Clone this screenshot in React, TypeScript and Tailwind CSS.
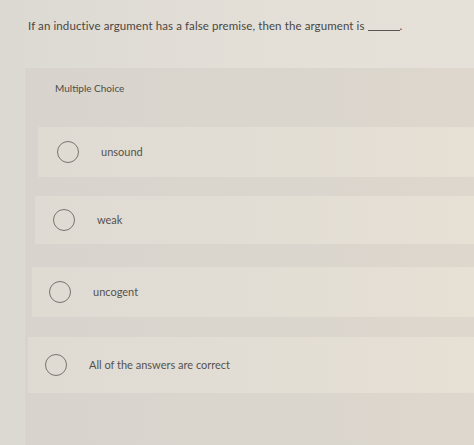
import React from "react";

const options = [
  { label: "unsound", ml: "ml-[38px]", h: "h-[50px]", pl: "pl-[19px]", gap: "gap-[22px]", mt: "mt-[32px]" },
  { label: "weak", ml: "ml-[35px]", h: "h-[48px]", pl: "pl-[18px]", gap: "gap-[22px]", mt: "mt-[19px]" },
  { label: "uncogent", ml: "ml-[32px]", h: "h-[50px]", pl: "pl-[17px]", gap: "gap-[22px]", mt: "mt-[23px]" },
  { label: "All of the answers are correct", ml: "ml-[28px]", h: "h-[56px]", pl: "pl-[17px]", gap: "gap-[22px]", mt: "mt-[20px]" },
];

export default function App() {
  return (
    <div
      className="w-[474px] h-[445px] overflow-hidden bg-gradient-to-r from-[#dcd9d3] via-[#e3dfd7] to-[#e6e1d8] text-[#4a4845]"
      style={{ fontFamily: "Lato, 'Open Sans', 'Liberation Sans', sans-serif" }}
    >
      <div className="pt-[16px] pl-[28px] text-[11.5px] leading-[20px] text-[#4a4743] tracking-[0.1px]">
        If an inductive argument has a false premise, then the argument is{" "}
        <span className="inline-block w-[32px] border-b border-[#5a5753] align-baseline -mb-[1px]"></span>.
      </div>
      <div className="mt-[32px] ml-[25px] h-[400px] bg-gradient-to-r from-[#d8d4cd] to-[#ddd7cd] pt-[13px]">
        <div className="pl-[30px] text-[10px] leading-[14px] text-[#4f4c48]">Multiple Choice</div>
        <div className="-ml-[25px] flex flex-col">
          {options.map((o) => (
            <div
              key={o.label}
              className={`${o.ml} ${o.h} ${o.mt} ${o.pl} ${o.gap} flex items-center bg-gradient-to-r from-[#dfdbd3] to-[#e6e0d5]`}
            >
              <div className="w-[22px] h-[22px] rounded-full border border-[#77736e] shrink-0"></div>
              <span className="text-[11px] text-[#55524e]">{o.label}</span>
            </div>
          ))}
        </div>
      </div>
    </div>
  );
}
